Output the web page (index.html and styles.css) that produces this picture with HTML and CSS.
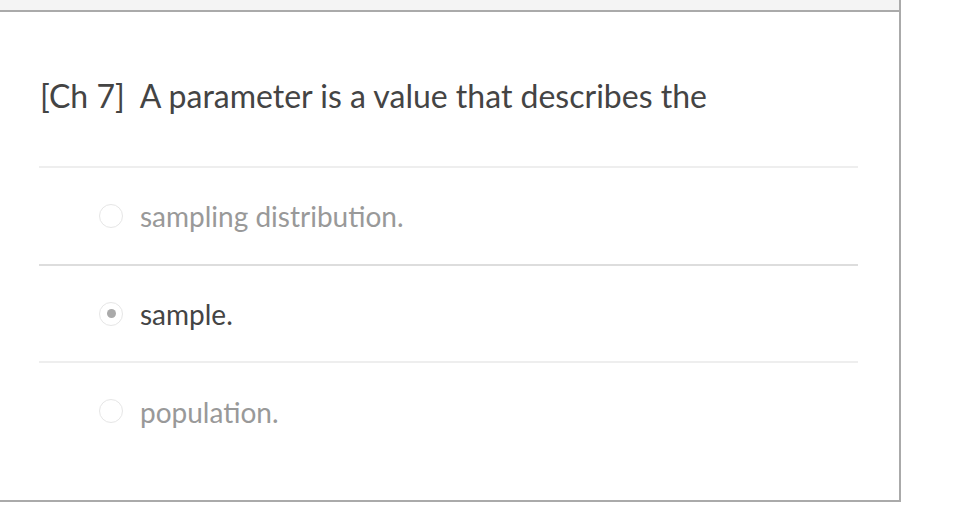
FILE: index.html
```html
<!DOCTYPE html>
<html>
<head>
<meta charset="utf-8">
<link rel="stylesheet" href="styles.css">
</head>
<body>
<div class="card">
  <div class="topband"></div>
  <div class="question">
    <span class="tag">[Ch 7]</span><span class="qtext">A parameter is a value that describes the</span>
  </div>
  <div class="answers">
    <div class="row">
      <span class="radio"></span>
      <span class="label">sampling distribution.</span>
    </div>
    <div class="row row-dark selected">
      <span class="radio"><span class="dot"></span></span>
      <span class="label">sample.</span>
    </div>
    <div class="row last">
      <span class="radio"></span>
      <span class="label">population.</span>
    </div>
  </div>
</div>
</body>
</html>
```

FILE: styles.css
```css
html, body {
  margin: 0;
  padding: 0;
  background: #fff;
}
body {
  font-family: Lato, "Open Sans", sans-serif;
}
.card {
  width: 899px;
  height: 500px;
  border-right: 2px solid #aaa;
  border-bottom: 2px solid #aaa;
  display: flex;
  flex-direction: column;
}
.topband {
  height: 10px;
  background: #f4f4f4;
  border-bottom: 2px solid #aaa;
}
.question {
  height: 154px;
  box-sizing: border-box;
  padding: 0 0 0 40px;
  display: flex;
  align-items: center;
  padding-bottom: 0;
  padding-top: 12px;
  font-size: 32px;
  color: #444;
}
.tag {
  margin-right: 15px;
}
.answers {
  margin: 0 41px 0 39px;
  display: flex;
  flex-direction: column;
}
.row {
  height: 98px;
  border-top: 2px solid #eee;
  display: flex;
  align-items: center;
  padding-left: 60px;
  padding-bottom: 0;
  box-sizing: border-box;
  font-size: 28px;
  color: #999;
}
.row-dark {
  border-top-color: #ddd;
  height: 97px;
}
.row.last {
  height: 135px;
  align-items: flex-start;
  padding-top: 32px;
}
.selected {
  color: #444;
}
.radio {
  width: 22px;
  height: 22px;
  border: 1px solid #e6e6e6;
  border-radius: 50%;
  display: flex;
  align-items: center;
  justify-content: center;
  margin-right: 17px;
  flex-shrink: 0;
}
.last .radio {
  margin-top: 4px;
}
.dot {
  width: 9px;
  height: 9px;
  border-radius: 50%;
  background: #aaa;
}
```
